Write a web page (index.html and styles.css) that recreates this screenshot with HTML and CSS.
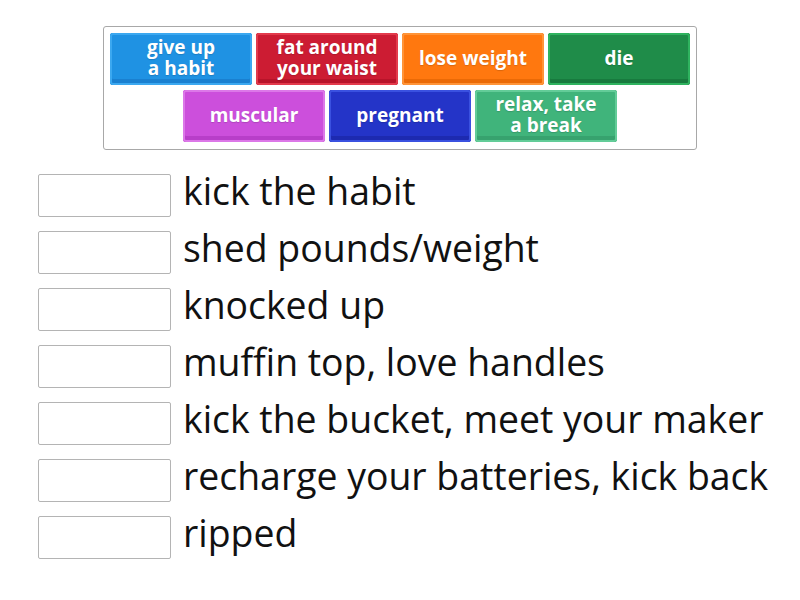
FILE: index.html
```html
<!DOCTYPE html>
<html>
<head>
<meta charset="utf-8">
<link rel="stylesheet" href="styles.css">
</head>
<body>
<div class="page">
  <div class="bank">
    <div class="row">
      <div class="tile c-blue">give up<br>a habit</div>
      <div class="tile c-red">fat around<br>your waist</div>
      <div class="tile c-orange">lose weight</div>
      <div class="tile c-green">die</div>
    </div>
    <div class="row">
      <div class="tile c-purple">muscular</div>
      <div class="tile c-navy">pregnant</div>
      <div class="tile c-teal">relax, take<br>a break</div>
    </div>
  </div>
  <div class="list">
    <div class="item"><div class="slot"></div><div class="label">kick the habit</div></div>
    <div class="item"><div class="slot"></div><div class="label">shed pounds/weight</div></div>
    <div class="item"><div class="slot"></div><div class="label">knocked up</div></div>
    <div class="item"><div class="slot"></div><div class="label">muffin top, love handles</div></div>
    <div class="item"><div class="slot"></div><div class="label">kick the bucket, meet your maker</div></div>
    <div class="item"><div class="slot"></div><div class="label">recharge your batteries, kick back</div></div>
    <div class="item"><div class="slot"></div><div class="label">ripped</div></div>
  </div>
</div>
</body>
</html>
```
FILE: styles.css
```css
html, body { margin: 0; padding: 0; background: #fff; }
body { font-family: "Open Sans", "Noto Sans", sans-serif; }
.page { width: 800px; height: 600px; padding-top: 26px; box-sizing: border-box; }
.bank {
  width: 594px; margin: 0 auto; box-sizing: border-box;
  border: 1px solid #a8a8a8; border-radius: 3px;
  padding: 6px 6px 7px; display: flex; flex-direction: column; gap: 5px;
}
.row { display: flex; justify-content: center; gap: 4px; }
.tile {
  width: 142px; height: 52px; box-sizing: border-box;
  display: flex; align-items: center; justify-content: center; text-align: center;
  color: #fff; font-weight: 700; font-size: 19px; line-height: 21px;
  border-radius: 3px; padding-bottom: 2px;
  box-shadow: inset 0 0 0 2px var(--edge), inset 0 -4px 0 2px var(--dark);
  background: var(--face);
  text-shadow: 0 1px 1px rgba(0,0,0,0.15);
}
.c-blue { --face: #1f92e3; --edge: #3ba8f0; --dark: #1a80d0; }
.c-red { --face: #cc1c33; --edge: #e33a4c; --dark: #b8142a; }
.c-orange { --face: #ff780f; --edge: #ff9438; --dark: #ea6a06; }
.c-green { --face: #1f8c49; --edge: #2fb35f; --dark: #187a3e; }
.c-purple { --face: #cc4fdc; --edge: #dc78e8; --dark: #b83ec9; }
.c-navy { --face: #2434c8; --edge: #3a51e0; --dark: #1d2ab0; }
.c-teal { --face: #40b47b; --edge: #63cc98; --dark: #37a26e; }
.list { margin-top: 24px; padding-left: 38px; display: flex; flex-direction: column; gap: 14px; }
.item { display: flex; align-items: flex-start; height: 43px; }
.slot { width: 133px; height: 43px; box-sizing: border-box; border: 1px solid #b4b4b4; border-radius: 2px; flex: none; }
.label { margin-left: 12px; font-size: 37.4px; color: #111; white-space: nowrap; line-height: 33px; }
```
